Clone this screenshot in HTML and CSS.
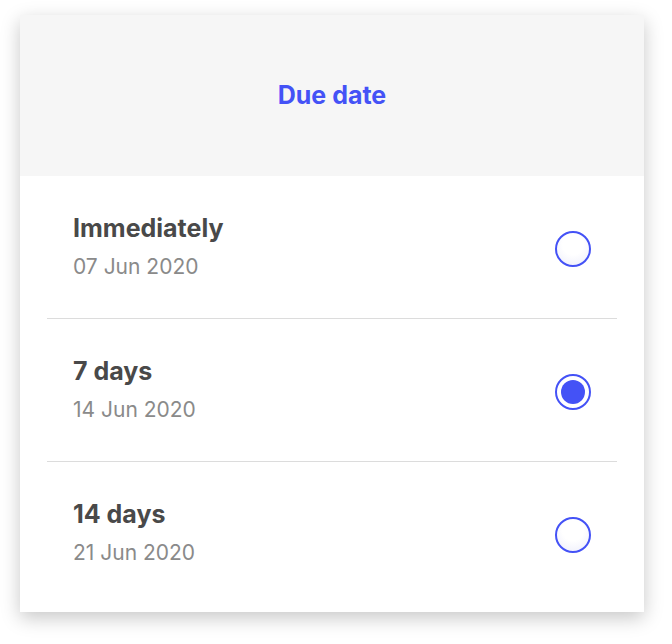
FILE: index.html
```html
<!DOCTYPE html>
<html lang="en">
<head>
  <meta charset="UTF-8">
  <meta name="viewport" content="width=device-width, initial-scale=1.0">
  <title>Due date</title>
  <link rel="stylesheet" href="styles.css">
</head>
<body>
  <div class="card">
    <div class="card-header">
      <h1>Due date</h1>
    </div>

    <!-- Due date options -->
    <ul class="options">
      <li class="option">
        <div class="option-text">
          <div class="option-title">Immediately</div>
          <div class="option-date">07 Jun 2020</div>
        </div>
        <span class="radio"></span>
      </li>
      <li class="option">
        <div class="option-text">
          <div class="option-title">7 days</div>
          <div class="option-date">14 Jun 2020</div>
        </div>
        <span class="radio checked"></span>
      </li>
      <li class="option">
        <div class="option-text">
          <div class="option-title">14 days</div>
          <div class="option-date">21 Jun 2020</div>
        </div>
        <span class="radio"></span>
      </li>
    </ul>
  </div>
</body>
</html>
```

FILE: styles.css
```css
body {
  margin: 0;
  padding: 15px 28px 32px 20px;
  background-color: #ffffff;
  font-family: Inter, "Noto Sans", sans-serif;
}

.card {
  width: 624px;
  background-color: #ffffff;
  box-shadow: 0 6px 18px rgba(0, 0, 0, 0.22);
}

.card-header {
  height: 161px;
  background-color: #f6f6f6;
  display: flex;
  align-items: center;
  justify-content: center;
}

.card-header h1 {
  margin: 0 0 2px;
  font-size: 25px;
  font-weight: 700;
  color: #4452f6;
}

.options {
  list-style: none;
  margin: 0;
  padding: 0 27px 8px;
}

.option {
  height: 142px;
  display: flex;
  align-items: center;
  justify-content: space-between;
  padding: 0 26px;
  border-bottom: 1px solid #dcdcdc;
}

.option:last-child {
  border-bottom: none;
}

.option-text {
  margin-bottom: 3px;
}

.option-title {
  font-size: 25px;
  font-weight: 700;
  color: #494949;
}

.option-date {
  margin-top: 11px;
  font-size: 21px;
  color: #8a8a8a;
}

.radio {
  width: 32px;
  height: 32px;
  margin-top: 3px;
  border: 2px solid #4452f6;
  border-radius: 50%;
  background: radial-gradient(circle at 50% 35%, #ffffff 40%, #ecedfb 100%);
  position: relative;
}

.radio.checked {
  background: #ffffff;
}

.radio.checked::after {
  content: "";
  position: absolute;
  top: 4px;
  left: 4px;
  width: 24px;
  height: 24px;
  border-radius: 50%;
  background-color: #4452f6;
}
```
